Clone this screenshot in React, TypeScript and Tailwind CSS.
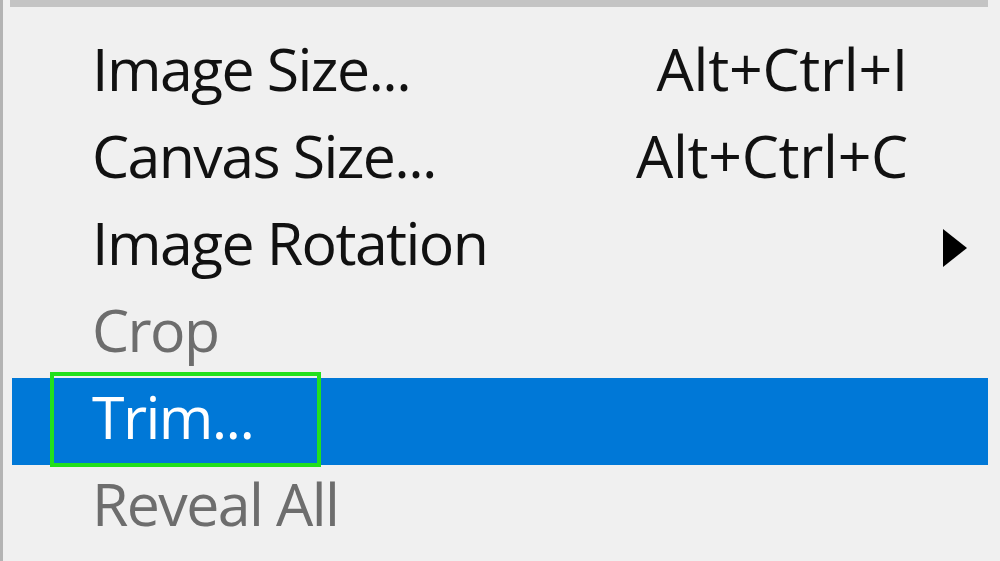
const items = [
  { label: "Image Size...", shortcut: "Alt+Ctrl+I" },
  { label: "Canvas Size...", shortcut: "Alt+Ctrl+C" },
  { label: "Image Rotation", submenu: true },
  { label: "Crop", disabled: true },
  { label: "Trim...", active: true },
  { label: "Reveal All", disabled: true },
];

export default function App() {
  return (
    <div className="w-[1000px] h-[561px] overflow-hidden bg-[#f0f0f0] flex font-['Open_Sans',sans-serif]">
      {/* left menu edge */}
      <div className="w-[3px] h-full bg-[#b4b4b4]" />
      <div className="flex-1 flex flex-col">
        {/* bottom edge of the menu above */}
        <div className="h-[7px] ml-[7px] mr-[12px] bg-[#c4c4c4]" />
        <div className="pt-[23px] pl-[9px] pr-[12px] flex flex-col">
          {items.map((it) => (
            <div
              key={it.label}
              className={`relative h-[87px] flex items-center pl-[80px] text-[59px] leading-none ${
                it.active ? "bg-[#0078d7] text-white" : it.disabled ? "text-[#6d6d6d]" : "text-[#111]"
              }`}
            >
              <span className="pb-[10px] tracking-[-1.6px]">{it.label}</span>
              {it.shortcut && (
                <span className="ml-auto mr-[80px] pb-[10px] tracking-[-0.3px]">{it.shortcut}</span>
              )}
              {it.submenu && (
                <svg className="ml-auto mr-[21px]" width="24" height="38" viewBox="0 0 24 38">
                  <path d="M0 0 L24 19 L0 38 Z" fill="#000" />
                </svg>
              )}
              {it.active && (
                <div className="absolute left-[38px] top-[-6px] w-[271px] h-[95px] border-[4px] border-[#22e01c]" />
              )}
            </div>
          ))}
        </div>
      </div>
    </div>
  );
}
